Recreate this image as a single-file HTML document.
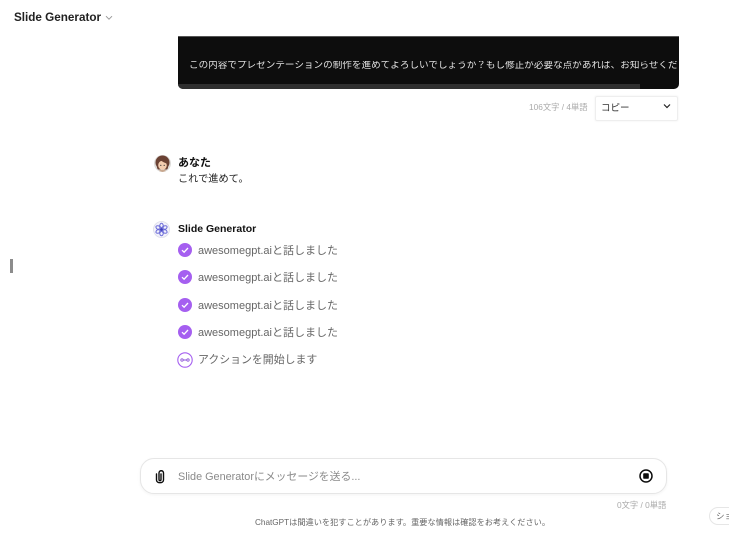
<!DOCTYPE html>
<html lang="ja"><head><meta charset="utf-8">
<style>
html,body{margin:0;padding:0;width:729px;height:533px;overflow:hidden;background:#fff}
body{position:relative;font-family:"Liberation Sans","Noto Sans CJK JP",sans-serif;color:#0d0d0d}
#w{position:absolute;left:0;top:0;width:729px;height:533px;filter:blur(.3px);overflow:hidden}
.a{position:absolute;white-space:nowrap;line-height:1}
.st{left:198px;font-size:11px;color:#666}
svg{position:absolute;display:block}
</style></head><body><div id="w">
<div class="a" style="left:14px;top:12px;font-size:11.7px;font-weight:700;color:#222">Slide Generator</div>
<svg style="left:105px;top:15px" width="8" height="6" viewBox="0 0 8 6"><path d="M1 1.2 4 4.2 7 1.2" fill="none" stroke="#999" stroke-width="1"/></svg>

<div style="position:absolute;left:178px;top:36px;width:501px;height:53px;background:#0d0d0d;border-radius:0 0 5px 5px;overflow:hidden;border-top:1px solid #555;box-sizing:border-box">
  <div class="a" style="left:11px;top:24px;font-size:9.6px;color:#e0e0e0;width:490px;overflow:hidden">この内容でプレゼンテーションの制作を進めてよろしいでしょうか？もし修正が必要な点があれば、お知らせください。</div>
  <div style="position:absolute;left:0;top:47px;width:462px;height:5px;background:#2f2f2f"></div>
</div>

<div class="a" style="left:529px;top:103px;font-size:8.3px;color:#aaa">106文字 / 4単語</div>
<div style="position:absolute;left:595px;top:96px;width:83px;height:25px;border:1px solid #eee;box-sizing:border-box;border-radius:2px;box-shadow:0 0 2px #eee"></div>
<div class="a" style="left:601px;top:104px;font-size:9.5px;color:#333">コピー</div>
<svg style="left:662px;top:103px" width="10" height="7" viewBox="0 0 10 7"><path d="M2 1.5 5 4.5 8 1.5" fill="none" stroke="#222" stroke-width="1.2"/></svg>

<svg style="left:154px;top:155px" width="17" height="17" viewBox="0 0 17 17">
  <circle cx="8.5" cy="8.5" r="8.5" fill="#dcdad8"/>
  <circle cx="8.5" cy="7.5" r="7" fill="#6b4234"/>
  <path d="M3 13V7H14V13L13 14.5H4Z" fill="#6b4234"/>
  <ellipse cx="8.5" cy="10.2" rx="4.3" ry="4.6" fill="#f3cdb0"/>
  <path d="M4 9C5 6 7 5.5 8 6.2 9.5 7.5 11.5 7.5 13 9 13.5 5 11 3 8.5 3 6 3 3.5 5 4 9Z" fill="#6b4234"/>
  <path d="M5 16C6 14.4 11 14.4 12 16L8.5 17Z" fill="#c9a88f"/>
  <circle cx="6.8" cy="10.4" r=".6" fill="#333"/><circle cx="10.2" cy="10.4" r=".6" fill="#333"/>
</svg>
<div class="a" style="left:178px;top:158px;font-size:11px;font-weight:700;color:#111">あなた</div>
<div class="a" style="left:178px;top:175px;font-size:10.2px;color:#222">これで進めて。</div>

<svg style="left:153px;top:221px" width="17" height="17" viewBox="0 0 17 17">
  <circle cx="8.5" cy="8.5" r="8" fill="#f2f2fa" stroke="#dcdcea" stroke-width=".8"/>
  <g fill="none" stroke="#6a6ad8" stroke-width="1">
    <ellipse cx="8.5" cy="5.3" rx="1.8" ry="3.1"/>
    <ellipse cx="8.5" cy="5.3" rx="1.8" ry="3.1" transform="rotate(60 8.5 8.5)"/>
    <ellipse cx="8.5" cy="5.3" rx="1.8" ry="3.1" transform="rotate(120 8.5 8.5)"/>
    <ellipse cx="8.5" cy="5.3" rx="1.8" ry="3.1" transform="rotate(180 8.5 8.5)"/>
    <ellipse cx="8.5" cy="5.3" rx="1.8" ry="3.1" transform="rotate(240 8.5 8.5)"/>
    <ellipse cx="8.5" cy="5.3" rx="1.8" ry="3.1" transform="rotate(300 8.5 8.5)"/>
  </g>
  <circle cx="8.5" cy="8.5" r="1.3" fill="#3d3db8"/>
</svg>
<div class="a" style="left:178px;top:224px;font-size:10.5px;font-weight:700;color:#111">Slide Generator</div>

<svg style="left:178px;top:243px" width="14" height="14" viewBox="0 0 14 14"><circle cx="7" cy="7" r="7" fill="#a55ff0"/><path d="M4 7.2 6.1 9.2 10 5" fill="none" stroke="#fff" stroke-width="1.3"/></svg>
<div class="a st" style="top:246px">awesomegpt.aiと話しました</div>
<svg style="left:178px;top:270px" width="14" height="14" viewBox="0 0 14 14"><circle cx="7" cy="7" r="7" fill="#a55ff0"/><path d="M4 7.2 6.1 9.2 10 5" fill="none" stroke="#fff" stroke-width="1.3"/></svg>
<div class="a st" style="top:273px">awesomegpt.aiと話しました</div>
<svg style="left:178px;top:298px" width="14" height="14" viewBox="0 0 14 14"><circle cx="7" cy="7" r="7" fill="#a55ff0"/><path d="M4 7.2 6.1 9.2 10 5" fill="none" stroke="#fff" stroke-width="1.3"/></svg>
<div class="a st" style="top:301px">awesomegpt.aiと話しました</div>
<svg style="left:178px;top:325px" width="14" height="14" viewBox="0 0 14 14"><circle cx="7" cy="7" r="7" fill="#a55ff0"/><path d="M4 7.2 6.1 9.2 10 5" fill="none" stroke="#fff" stroke-width="1.3"/></svg>
<div class="a st" style="top:328px">awesomegpt.aiと話しました</div>
<svg style="left:177px;top:352px" width="16" height="16" viewBox="0 0 16 16"><circle cx="8" cy="8" r="7.2" fill="#fff" stroke="#a55ff0" stroke-width="1.1"/><path d="M5.8 8H10.2" stroke="#8a4fd8" stroke-width="1"/><circle cx="5" cy="8" r="1.2" fill="#fff" stroke="#8a4fd8" stroke-width=".8"/><circle cx="11" cy="8" r="1.2" fill="#fff" stroke="#8a4fd8" stroke-width=".8"/></svg>
<div class="a st" style="top:355px;font-size:10.9px">アクションを開始します</div>

<div style="position:absolute;left:10px;top:259px;width:3px;height:14px;background:#8c8c8c"></div>

<div style="position:absolute;left:140px;top:458px;width:527px;height:36px;border:1px solid #e6e6e6;box-sizing:border-box;border-radius:14px;box-shadow:0 1px 3px rgba(0,0,0,.05);background:#fff"></div>
<svg style="left:153px;top:469px" width="14" height="16" viewBox="0 0 14 16"><path d="M3.5 5V11C3.5 14.6 10.5 14.6 10.5 11V4C10.5 1 6 1 6 4V10.5C6 12 8 12 8 10.5V5" fill="none" stroke="#0d0d0d" stroke-width="1.4" stroke-linecap="round"/></svg>
<div class="a" style="left:178px;top:472px;font-size:10.85px;color:#8a8a8a">Slide Generatorにメッセージを送る...</div>
<svg style="left:639px;top:469px" width="14" height="14" viewBox="0 0 14 14"><circle cx="7" cy="7" r="6" fill="#fff" stroke="#0d0d0d" stroke-width="1.5"/><rect x="4.2" y="4.2" width="5.6" height="5.6" rx=".8" fill="#0d0d0d"/></svg>
<div class="a" style="left:617px;top:501px;font-size:8.3px;color:#aaa">0文字 / 0単語</div>
<div class="a" style="left:255px;top:519px;font-size:8.2px;color:#666">ChatGPTは間違いを犯すことがあります。重要な情報は確認をお考えください。</div>
<div style="position:absolute;left:709px;top:507px;width:40px;height:18px;border:1px solid #e6e6e6;box-sizing:border-box;border-radius:9px;background:#fff"></div>
<div class="a" style="left:716px;top:512px;font-size:8.5px;color:#666">ショ</div>
</div></body></html>
